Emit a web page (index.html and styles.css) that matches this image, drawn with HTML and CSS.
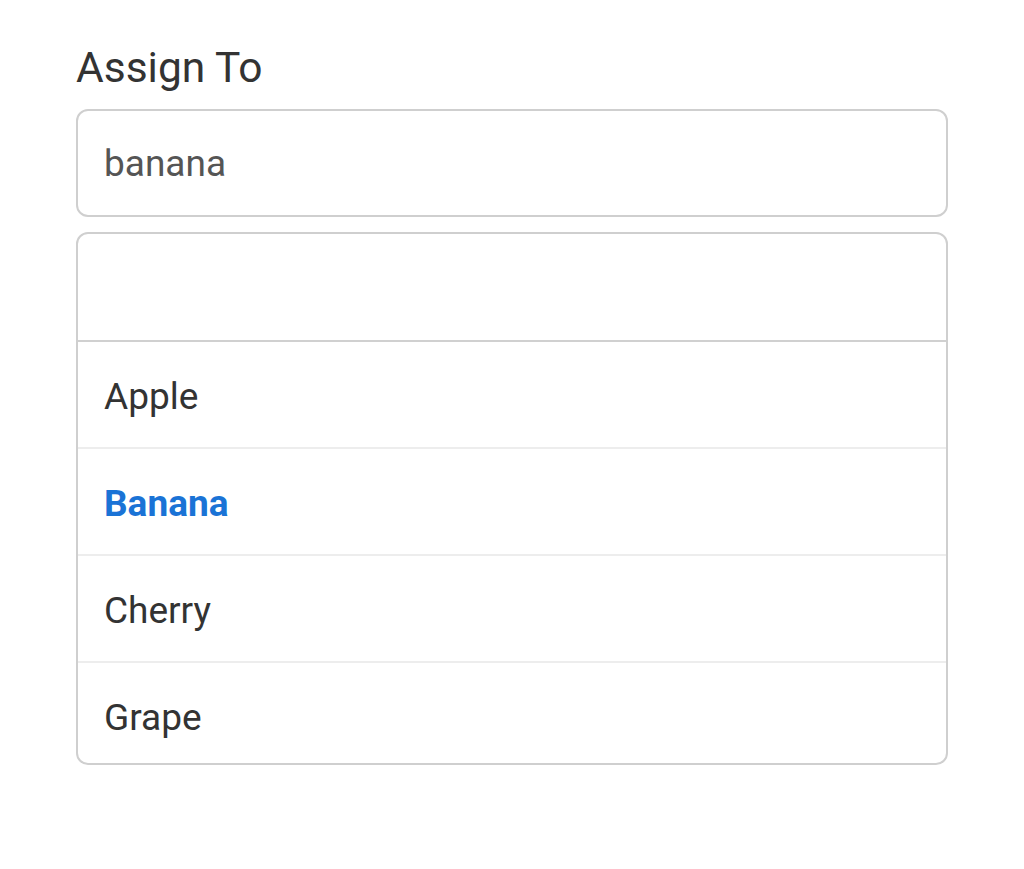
FILE: index.html
```html
<!DOCTYPE html>
<html>
<head>
<meta charset="utf-8">
<link rel="stylesheet" href="styles.css">
</head>
<body>
<div class="field">
  <label class="label">Assign To</label>
  <div class="input">banana</div>
  <div class="dropdown">
    <div class="search"></div>
    <ul class="list">
      <li class="item">Apple</li>
      <li class="item selected">Banana</li>
      <li class="item">Cherry</li>
      <li class="item">Grape</li>
    </ul>
  </div>
</div>
</body>
</html>
```
FILE: styles.css
```css
html, body {
  margin: 0;
  padding: 0;
  background: #fff;
}
body {
  font-family: Roboto, "Liberation Sans", sans-serif;
  color: #333;
}
.field {
  width: 872px;
  margin-left: 76px;
  padding-top: 42px;
  display: flex;
  flex-direction: column;
}
.label {
  font-size: 42.5px;
  line-height: 52px;
  color: #333;
  margin-bottom: 15px;
}
.input {
  box-sizing: border-box;
  height: 108px;
  border: 2px solid #cfcfcf;
  border-radius: 12px;
  padding-left: 26px;
  display: flex;
  align-items: center;
  font-size: 37px;
  color: #555;
}
.dropdown {
  margin-top: 15px;
  box-sizing: border-box;
  border: 2px solid #cfcfcf;
  border-radius: 12px;
  overflow: hidden;
}
.search {
  height: 106px;
  border-bottom: 2px solid #d0d0d0;
}
.list {
  list-style: none;
  margin: 0;
  padding: 0;
}
.item {
  height: 102px;
  padding-left: 26px;
  padding-top: 3px;
  box-sizing: content-box;
  display: flex;
  align-items: center;
  font-size: 37px;
  color: #333;
  border-top: 2px solid #ededed;
}
.item:first-child {
  border-top: none;
}
.item:last-child {
  height: 92px;
  padding-top: 8px;
}
.item.selected {
  color: #1a73d6;
  font-weight: bold;
}
```
